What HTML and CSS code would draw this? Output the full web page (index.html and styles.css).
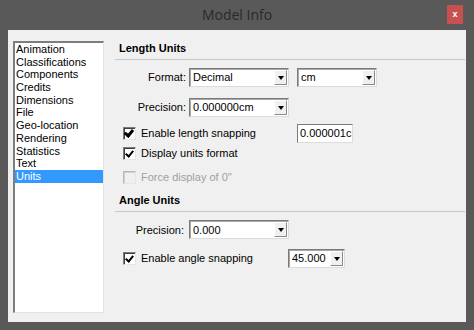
FILE: index.html
```html
<html>
  <head>
    <meta name='viewport' content='width=device-width, initial-scale=1.0'>
    <title>Model Info</title>
    <link rel="stylesheet" href="styles.css">
  </head>
  <body>

    <div class="titlebar">
      <span></span>
      <span class="title">Model Info</span>
      <span class="close">x</span>
    </div>

    <div class="panel">
      <ul class="listbox">
        <li>Animation</li>
        <li>Classifications</li>
        <li>Components</li>
        <li>Credits</li>
        <li>Dimensions</li>
        <li>File</li>
        <li>Geo-location</li>
        <li>Rendering</li>
        <li>Statistics</li>
        <li>Text</li>
        <li class="selected">Units</li>
      </ul>

      <div class="pane">
        <div class="group-title">Length Units</div>

        <div class="row row-format">
          <span class="lbl">Format:</span>
          <div class="combo w-main"><span class="val">Decimal</span><span class="drop"></span></div>
          <div class="combo w-unit"><span class="val">cm</span><span class="drop"></span></div>
        </div>

        <div class="row row-precision">
          <span class="lbl">Precision:</span>
          <div class="combo w-main"><span class="val">0.000000cm</span><span class="drop"></span></div>
        </div>

        <div class="row check-row row-snap">
          <span class="check checked bold"></span>
          <span class="check-text w-snap">Enable length snapping</span>
          <div class="textbox">0.000001c</div>
        </div>

        <div class="row check-row row-display">
          <span class="check checked"></span>
          <span class="check-text">Display units format</span>
        </div>

        <div class="row check-row row-force">
          <span class="check disabled"></span>
          <span class="check-text disabled-text">Force display of 0"</span>
        </div>

        <div class="group-title angle-title">Angle Units</div>

        <div class="row row-aprecision">
          <span class="lbl">Precision:</span>
          <div class="combo w-angle"><span class="val">0.000</span><span class="drop"></span></div>
        </div>

        <div class="row check-row row-asnap">
          <span class="check checked"></span>
          <span class="check-text w-asnap">Enable angle snapping</span>
          <div class="combo w-deg"><span class="val">45.000</span><span class="drop"></span></div>
        </div>
      </div>
    </div>

  </body>
</html>
```

FILE: styles.css
```css
* {
  margin: 0;
  padding: 0;
  box-sizing: border-box;
}

html, body {
  width: 100%;
  height: 100%;
}

body {
  background: #595959;
  font-family: "Liberation Sans", Arial, sans-serif;
  font-size: 11px;
  color: #000;
  overflow: hidden;
}

/* title bar */

.titlebar {
  height: 30px;
  display: grid;
  grid-template-columns: 1fr auto 1fr;
  align-items: start;
}

.title {
  font-family: "Open Sans", "Liberation Sans", sans-serif;
  font-size: 14px;
  color: #2a2a2a;
  line-height: 30px;
}

.close {
  justify-self: end;
  margin: 5px 11px 0 0;
  width: 16px;
  height: 19px;
  background: #c75050;
  color: #fff;
  font-size: 9px;
  font-weight: bold;
  line-height: 18px;
  text-align: center;
}

/* main panel */

.panel {
  margin: 0 8px;
  height: 292px;
  background: #f0f0f0;
  display: flex;
  padding: 11px 0 0 5px;
}

.listbox {
  list-style: none;
  width: 91px;
  height: 272px;
  background: #fff;
  border-top: 2px solid #7d7d7d;
  border-left: 2px solid #7d7d7d;
  border-right: 1px solid #e3e3e3;
  border-bottom: 1px solid #e3e3e3;
}

.listbox li {
  height: 12.7px;
  line-height: 12.7px;
  padding-left: 1px;
  white-space: nowrap;
}

.listbox li.selected {
  background: #3399ff;
  color: #fff;
}

.pane {
  flex: 1;
  margin-left: 9px;
  margin-right: 1px;
}

.group-title {
  font-weight: bold;
  line-height: 14px;
  padding: 0 0 4px 4px;
  margin-left: 2px;
  border-bottom: 1px solid #c8c8c8;
}

.angle-title {
  margin-top: 6px;
}

.row {
  display: flex;
  align-items: center;
  height: 20px;
}

.row-format { margin-top: 7px; }
.row-precision { margin-top: 10px; }
.row-snap { margin-top: 6px; }
.row-display { margin-top: 0; }
.row-force { margin-top: 4px; }
.row-aprecision { margin-top: 8px; height: 19px; }
.row-asnap { margin-top: 9px; }

.lbl {
  width: 73px;
  text-align: right;
  margin-right: 3px;
}

.row-aprecision .lbl {
  width: 71px;
  margin-right: 5px;
}

/* combo boxes */

.combo {
  height: 19px;
  display: flex;
  align-items: center;
  background: #fff;
  border-top: 1px solid #7a7a7a;
  border-left: 1px solid #7a7a7a;
  border-right: 1px solid #dcdcdc;
  border-bottom: 1px solid #dcdcdc;
  box-shadow: inset 1px 1px 0 #a8a8a8;
}

.combo .val {
  flex: 1;
  padding-left: 3px;
  white-space: nowrap;
  overflow: hidden;
}

.combo .drop {
  width: 13px;
  height: 15px;
  margin-right: 1px;
  background: #f0f0f0;
  border-top: 1px solid #fff;
  border-left: 1px solid #fff;
  border-right: 1px solid #8a8a8a;
  border-bottom: 1px solid #8a8a8a;
  display: flex;
  align-items: center;
  justify-content: center;
}

.combo .drop::after {
  content: "";
  border-left: 3.5px solid transparent;
  border-right: 3.5px solid transparent;
  border-top: 4px solid #000;
  margin-top: 1px;
}

.w-main { width: 100px; }
.w-unit { width: 80px; margin-left: 8px; }
.w-angle { width: 100px; }
.w-deg { width: 57px; }

.textbox {
  width: 56px;
  height: 19px;
  background: #fff;
  border-top: 1px solid #7a7a7a;
  border-left: 1px solid #7a7a7a;
  border-right: 1px solid #dcdcdc;
  border-bottom: 1px solid #dcdcdc;
  line-height: 17px;
  padding-left: 2px;
  white-space: nowrap;
  overflow: hidden;
}

/* checkboxes */

.check-row {
  padding-left: 10px;
}

.check {
  width: 13px;
  height: 13px;
  background: #fff;
  border-top: 1px solid #7a7a7a;
  border-left: 1px solid #7a7a7a;
  border-right: 1px solid #e6e6e6;
  border-bottom: 1px solid #e6e6e6;
  box-shadow: inset 1px 1px 0 #404040;
  position: relative;
  flex: none;
}

.check.checked::after {
  content: "";
  position: absolute;
  left: 3px;
  top: 1px;
  width: 3px;
  height: 6px;
  border-right: 2px solid #000;
  border-bottom: 2px solid #000;
  transform: rotate(40deg);
}

.check.bold::after {
  border-right-width: 3px;
  border-bottom-width: 3px;
  left: 2px;
  top: 0;
}

.check.disabled {
  background: #f0f0f0;
  border-top-color: #b8b8b8;
  border-left-color: #b8b8b8;
  box-shadow: inset 1px 1px 0 #d0d0d0;
}

.check-text {
  margin-left: 5px;
  white-space: nowrap;
}

.disabled-text {
  color: #a0a0a0;
}

.w-snap { width: 156px; }
.w-asnap { width: 147px; }
```
